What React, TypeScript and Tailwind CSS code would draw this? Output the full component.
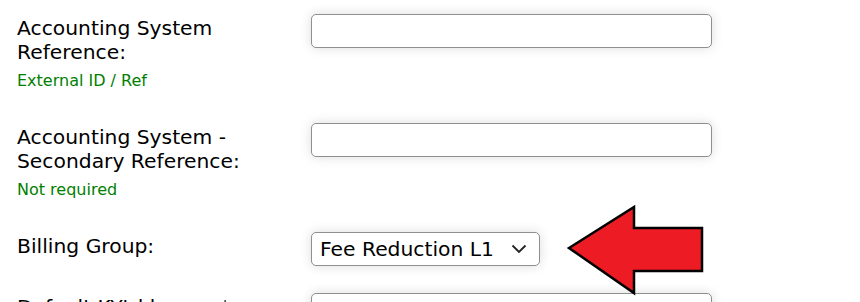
import React from "react";

const font = { fontFamily: '"DejaVu Sans", sans-serif' };

function Row({
  label,
  hint,
  h,
  children,
}: {
  label: React.ReactNode;
  hint?: string;
  h: string;
  children: React.ReactNode;
}) {
  return (
    <div className={`flex ${h}`}>
      <div className="w-[311px] shrink-0 pl-[17px] pt-[2px]">
        <div className="text-[20.3px] leading-[24px] text-black">{label}</div>
        {hint && (
          <div className="mt-[7px] text-[16px] leading-[20px] text-[#008000]">{hint}</div>
        )}
      </div>
      <div>{children}</div>
    </div>
  );
}

function TextBox() {
  return (
    <div className="h-[34px] w-[401px] rounded-[5px] border border-[#8f8f8f] bg-white shadow-[0_0_12px_rgba(0,0,0,0.14)]" />
  );
}

export default function App() {
  return (
    <div className="relative h-[302px] w-[860px] overflow-hidden bg-white pt-[14px]" style={font}>
      <Row label={<>Accounting System<br />Reference:</>} hint="External ID / Ref" h="h-[109px]">
        <TextBox />
      </Row>
      <Row label={<>Accounting System -<br />Secondary Reference:</>} hint="Not required" h="h-[109px]">
        <TextBox />
      </Row>
      <Row label="Billing Group:" h="h-[61px]">
        <div className="flex h-[34px] w-[229px] items-center justify-between rounded-[5px] border border-[#8f8f8f] bg-white pl-[8px] pr-[12px] shadow-[0_0_12px_rgba(0,0,0,0.14)]">
          <span className="text-[20.3px] leading-[24px] text-black">Fee Reduction L1</span>
          <svg width="16" height="10" viewBox="0 0 16 10" fill="none">
            <path d="M1.5 1.5 L8 8 L14.5 1.5" stroke="#222" strokeWidth="1.8" />
          </svg>
        </div>
      </Row>
      <Row label="Default KYtd hours: *" h="h-[61px]">
        <TextBox />
      </Row>
      <svg
        className="absolute left-0 top-0"
        width="860"
        height="302"
        viewBox="0 0 860 302"
        style={{ pointerEvents: "none" }}
      >
        <polygon
          points="569,248 634,207 634,228 702,228 702,271 634,271 634,293"
          fill="#ed1c24"
          stroke="#000"
          strokeWidth="2.5"
          strokeLinejoin="miter"
        />
      </svg>
    </div>
  );
}
